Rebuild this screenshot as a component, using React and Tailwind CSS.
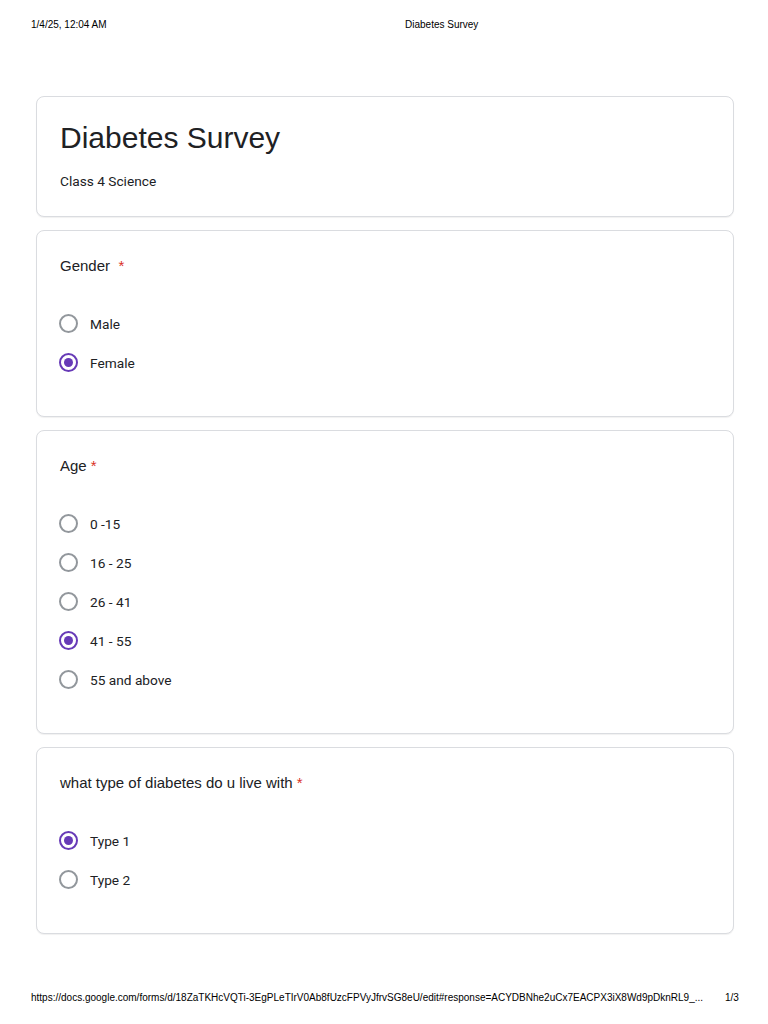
import React from "react";

function Radio({ checked }) {
  return checked ? (
    <span className="-ml-[1px] flex h-[19px] w-[19px] shrink-0 items-center justify-center rounded-full border-2 border-[#673ab7]">
      <span className="h-[9px] w-[9px] rounded-full bg-[#673ab7]" />
    </span>
  ) : (
    <span className="-ml-[1px] h-[19px] w-[19px] shrink-0 rounded-full border-2 border-[#92979c]" />
  );
}

const arial = { fontFamily: "'Liberation Sans', Arial, sans-serif" };

function Question({ title, sep = " ", options, selected }) {
  return (
    <div className="rounded-[8px] border border-[#dadce0] bg-white px-[23px] pt-[23px] pb-[34px] shadow-[0_1px_1px_rgba(0,0,0,0.06)]">
      <div className="text-[15px] leading-[24px] text-[#202124]" style={arial}>
        <span className="whitespace-pre">{title + sep}</span>
        <span className="text-[#d93025]">*</span>
      </div>
      <div className="mt-[26px] flex flex-col">
        {options.map((o, i) => (
          <div key={o} className="flex h-[39px] items-center gap-[12px]">
            <Radio checked={i === selected} />
            <span className="text-[13.7px] leading-[20px] text-[#202124]">{o}</span>
          </div>
        ))}
      </div>
    </div>
  );
}

export default function App() {
  return (
    <div className="min-h-[1024px] w-[768px] bg-white" style={{ fontFamily: "Roboto, 'Liberation Sans', Arial, sans-serif" }}>
      <div className="flex pt-[19px] pl-[31px] text-[10px] leading-[12px] text-black" style={arial}>
        <div className="w-[374px]">1/4/25, 12:04 AM</div>
        <div>Diabetes Survey</div>
      </div>
      <div className="ml-[36px] mt-[65px] flex w-[698px] flex-col gap-[13px]">
        <div className="rounded-[8px] border border-[#dadce0] bg-white px-[23px] pt-[21px] pb-[25px] shadow-[0_1px_1px_rgba(0,0,0,0.06)]">
          <div className="text-[30px] leading-[40px] text-[#202124]" style={arial}>Diabetes Survey</div>
          <div className="mt-[13px] text-[13.7px] leading-[20px] text-[#202124]">Class 4 Science</div>
        </div>
        <Question title="Gender" sep="  " options={["Male", "Female"]} selected={1} />
        <Question title="Age" options={["0 -15", "16 - 25", "26 - 41", "41 - 55", "55 and above"]} selected={3} />
        <Question title="what type of diabetes do u live with" options={["Type 1", "Type 2"]} selected={0} />
      </div>
      <div className="mt-[58px] flex pl-[31px] text-[10px] leading-[12px] text-black" style={arial}>
        <div className="w-[694px] whitespace-nowrap">https://docs.google.com/forms/d/18ZaTKHcVQTi-3EgPLeTIrV0Ab8fUzcFPVyJfrvSG8eU/edit#response=ACYDBNhe2uCx7EACPX3iX8Wd9pDknRL9_...</div>
        <div>1/3</div>
      </div>
    </div>
  );
}
